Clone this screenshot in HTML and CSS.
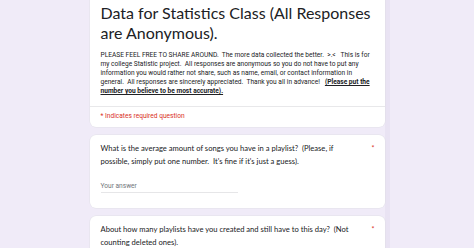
FILE: index.html
```html
<!DOCTYPE html>
<html>
<head>
<meta charset="utf-8">
<link rel="stylesheet" href="styles.css">
</head>
<body>
<main class="form">
  <section class="card title-card">
    <div class="title-body">
      <h1 class="title">Data for Statistics Class (All Responses are Anonymous).</h1>
      <p class="desc">PLEASE FEEL FREE TO SHARE AROUND.&nbsp; The more data collected the better.&nbsp; &gt;.&lt;&nbsp;&nbsp; This is for my college Statistic project.&nbsp; All responses are anonymous so you do not have to put any information you would rather not share, such as name, email, or contact information in general.&nbsp; All responses are sincerely appreciated.&nbsp; Thank you all in advance!&nbsp;&nbsp; <b class="u">(Please put the number you believe to be most accurate).</b></p>
    </div>
    <div class="required">* Indicates required question</div>
  </section>

  <section class="card question">
    <div class="q-head">
      <div class="q-text">What is the average amount of songs you have in a playlist?&nbsp; (Please, if possible, simply put one number.&nbsp; It's fine if it's just a guess).</div>
      <span class="star">*</span>
    </div>
    <div class="answer">Your answer</div>
  </section>

  <section class="card question">
    <div class="q-head">
      <div class="q-text">About how many playlists have you created and still have to this day?&nbsp; (Not counting deleted ones).</div>
      <span class="star">*</span>
    </div>
    <div class="answer">Your answer</div>
  </section>
</main>
</body>
</html>
```

FILE: styles.css
```css
html, body {
  margin: 0;
  padding: 0;
}
body {
  background: #f0ebf8 linear-gradient(to right, transparent 385px, #e9e3f3 385px, #e9e3f3 390px, transparent 390px);
  width: 474px;
  height: 248px;
  overflow: hidden;
  font-family: Lato, "Open Sans", sans-serif;
  color: #202124;
}
.form {
  width: 295px;
  margin: 0 auto;
  display: flex;
  flex-direction: column;
  gap: 8px;
}
.card {
  background: #fff;
  border-radius: 6px;
  box-shadow: 0 0 0 0.5px rgba(218, 220, 224, 0.6);
}
.title-card {
  border-radius: 0 0 6px 6px;
}
.title-body {
  padding: 3px 11px 10px 11px;
  border-bottom: 1px solid #e8e8ea;
}
.title {
  margin: 0;
  font-weight: 400;
  font-size: 16px;
  line-height: 20px;
}
.desc {
  margin: 8px 0 0 0;
  font-family: Roboto, "Open Sans", sans-serif;
  font-size: 6.6px;
  line-height: 9px;
}
.u {
  text-decoration: underline;
  font-weight: 700;
}
.required {
  color: #d93025;
  font-family: Roboto, sans-serif;
  font-size: 6.6px;
  line-height: 9px;
  padding: 5px 11px 6px;
}
.question {
  padding: 7px 10px 15px 11px;
}
.q-head {
  display: flex;
  justify-content: space-between;
}
.q-text {
  width: 259px;
  font-size: 7.6px;
  line-height: 13px;
}
.star {
  color: #d93025;
  font-size: 7px;
  line-height: 13px;
}
.answer {
  margin-top: 14px;
  width: 137px;
  font-family: Roboto, sans-serif;
  font-size: 6.6px;
  line-height: 9px;
  color: #70757a;
  border-bottom: 1px solid #e6e6e8;
  padding-bottom: 1px;
}
```
